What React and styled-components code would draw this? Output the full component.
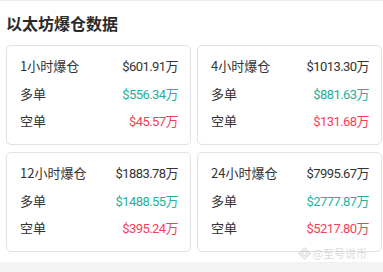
import React from "react";
import styled, { createGlobalStyle } from "styled-components";

const Global = createGlobalStyle`
  html, body { margin: 0; padding: 0; background: #fff; }
  body { font-family: "Noto Sans", "Noto Sans CJK SC", sans-serif; width: 383px; height: 272px; overflow: hidden; }
`;

const Page = styled.div`
  width: 383px;
  height: 272px;
  display: flex;
  flex-direction: column;
  border-top: 1px solid #ececec;
  box-sizing: border-box;
`;

const Main = styled.div`
  flex: 1;
  padding: 10px 1px 0 6px;
  position: relative;
`;

const Title = styled.h2`
  margin: 0;
  font-size: 16px;
  line-height: 24px;
  font-weight: 700;
  color: #2a2a2a;
  font-family: "Noto Sans CJK SC", sans-serif;
`;

const Grid = styled.div`
  margin-top: 10px;
  display: grid;
  grid-template-columns: 185px 185px;
  column-gap: 6px;
  row-gap: 7px;
`;

const Card = styled.div`
  height: 100px;
  box-sizing: border-box;
  border: 1px solid #e2e2e2;
  border-radius: 5px;
  padding: 6px 12px 0 13px;
  display: flex;
  flex-direction: column;
`;

const Row = styled.div`
  display: flex;
  justify-content: space-between;
  align-items: center;
  height: 27.5px;
  font-size: 13px;
  color: #333;
  font-family: "Noto Sans CJK SC", sans-serif;
`;

const Value = styled.span`
  font-family: "Roboto", "Noto Sans CJK SC", sans-serif;
  font-size: 13px;
  letter-spacing: -0.55px;
  color: ${(p) => (p.$tone === "up" ? "#24b29a" : p.$tone === "down" ? "#f53f5a" : "#333")};
`;

const Footer = styled.div`
  height: 10px;
  background: #f3f3f3;
`;

const Watermark = styled.div`
  position: absolute;
  right: 16px;
  bottom: 1px;
  display: flex;
  align-items: center;
  gap: 2px;
  font-size: 11px;
  color: rgba(170, 170, 170, 0.45);
  font-family: "Noto Sans CJK SC", sans-serif;
`;

const data = [
  { label: "1小时爆仓", total: "$601.91万", long: "$556.34万", short: "$45.57万" },
  { label: "4小时爆仓", total: "$1013.30万", long: "$881.63万", short: "$131.68万" },
  { label: "12小时爆仓", total: "$1883.78万", long: "$1488.55万", short: "$395.24万" },
  { label: "24小时爆仓", total: "$7995.67万", long: "$2777.87万", short: "$5217.80万" },
];

export default function App() {
  return (
    <>
      <Global />
      <Page>
        <Main>
          <Title>以太坊爆仓数据</Title>
          <Grid>
            {data.map((d) => (
              <Card key={d.label}>
                <Row>
                  <span>{d.label}</span>
                  <Value>{d.total}</Value>
                </Row>
                <Row>
                  <span>多单</span>
                  <Value $tone="up">{d.long}</Value>
                </Row>
                <Row>
                  <span>空单</span>
                  <Value $tone="down">{d.short}</Value>
                </Row>
              </Card>
            ))}
          </Grid>
          <Watermark>
            <svg width="13" height="13" viewBox="0 0 14 14" fill="none" stroke="rgba(170,170,170,0.45)" strokeWidth="1.2">
              <path d="M7 1 L13 7 L7 13 L1 7 Z" />
              <path d="M7 4 L10 7 L7 10 L4 7 Z" />
            </svg>
            <span>@至号说币</span>
          </Watermark>
        </Main>
        <Footer />
      </Page>
    </>
  );
}
